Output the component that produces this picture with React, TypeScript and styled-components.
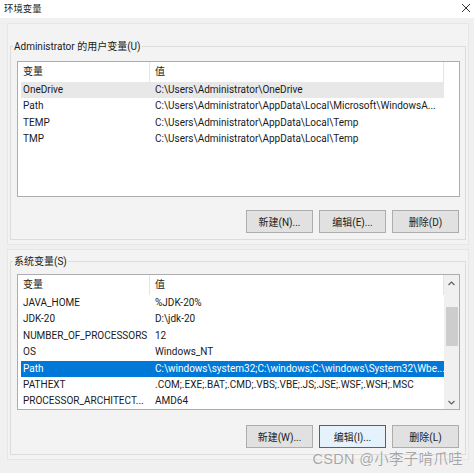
import React from "react";
import styled, { createGlobalStyle } from "styled-components";

const GlobalStyle = createGlobalStyle`
  html, body {
    margin: 0;
    padding: 0;
    background: #f0f0f0;
  }
  body {
    font-family: Roboto, "Noto Sans CJK SC", sans-serif;
    font-size: 10px;
    color: #1a1a1a;
  }
  * { box-sizing: border-box; }
`;

const Window = styled.div`
  position: relative;
  width: 474px;
  height: 473px;
  overflow: hidden;
  background: #f0f0f0;
  display: flex;
  flex-direction: column;
`;

const TitleBar = styled.div`
  height: 18px;
  background: #fff;
  display: flex;
  align-items: center;
  justify-content: space-between;
  padding: 0 3px 2px 4px;
`;

const Title = styled.span`
  font-size: 9.4px;
  color: #222;
`;

const Content = styled.div`
  padding: 5px 5px 0 7px;
  display: flex;
  flex-direction: column;
`;

const Panel = styled.div<{ $padTop: number; $mt?: number }>`
  margin-top: ${(p) => p.$mt ?? 0}px;
  border: 1px solid #e6e6e6;
  background: #f3f3f3;
  padding: ${(p) => p.$padTop}px 2px 4px 2px;
`;

const GroupBox = styled.fieldset<{ $gap: number }>`
  margin: 0;
  min-inline-size: 0;
  border: 1px solid #dcdcdc;
  padding: ${(p) => p.$gap}px 5px 6px 6px;
`;

const Legend = styled.legend`
  margin-left: -4px;
  padding: 0 1px;
  line-height: 13px;
  font-size: 10px;
  color: #1a1a1a;
`;

const ListBox = styled.div`
  height: 136px;
  border: 1px solid #adadad;
  background: #fff;
  display: flex;
  overflow: hidden;
`;

const ListArea = styled.div<{ $reserve: number }>`
  flex: 1;
  min-width: 0;
  padding: 0 ${(p) => p.$reserve}px 0 3px;
`;

const HeaderRow = styled.div`
  display: grid;
  grid-template-columns: 128px 1fr;
  height: 20px;
  line-height: 19px;
  border-right: 1px solid #e5e5e5;
`;

const HeaderCell = styled.div<{ $sep?: boolean }>`
  padding-left: ${(p) => (p.$sep ? 5 : 2)}px;
  border-left: ${(p) => (p.$sep ? "1px solid #e5e5e5" : "none")};
`;

const Row = styled.div<{ $state?: "selected" | "hover" }>`
  display: grid;
  grid-template-columns: 128px 1fr;
  height: 16.4px;
  line-height: 16.4px;
  white-space: nowrap;
  background: ${(p) =>
    p.$state === "selected" ? "#0078d7" : p.$state === "hover" ? "#e8e8e8" : "transparent"};
  color: ${(p) => (p.$state === "selected" ? "#fff" : "#1a1a1a")};
`;

const Cell = styled.div<{ $value?: boolean }>`
  padding-left: ${(p) => (p.$value ? 6 : 2)}px;
  overflow: hidden;
`;

const ScrollBar = styled.div`
  width: 15px;
  background: #f0f0f0;
  display: flex;
  flex-direction: column;
`;

const ArrowBox = styled.div<{ $h: number }>`
  height: ${(p) => p.$h}px;
  display: flex;
  align-items: center;
  justify-content: center;
`;

const Track = styled.div`
  flex: 1;
`;

const Thumb = styled.div`
  margin: 15px 1px 0 2px;
  height: 39px;
  background: #cdcdcd;
`;

const ButtonRow = styled.div<{ $mt: number }>`
  margin-top: ${(p) => p.$mt}px;
  display: flex;
  justify-content: flex-end;
  gap: 6px;
  padding-right: 1px;
`;

const Button = styled.button<{ $default?: boolean }>`
  width: 67px;
  height: 23px;
  padding: 0;
  font-family: Roboto, "Noto Sans CJK SC", sans-serif;
  font-size: 10px;
  color: #1a1a1a;
  background: ${(p) => (p.$default ? "#e5f1fb" : "#e1e1e1")};
  border: 1px solid ${(p) => (p.$default ? "#0078d7" : "#adadad")};
`;

const Watermark = styled.div`
  position: absolute;
  right: 11px;
  bottom: 5px;
  font-family: "Liberation Sans", "Noto Sans CJK SC", sans-serif;
  font-size: 14.5px;
  letter-spacing: 0.3px;
  color: rgba(150, 150, 150, 0.85);
  text-shadow: 0 0 1px #fff;
  pointer-events: none;
`;

type Variable = { name: string; value: string; state?: "selected" | "hover" };

const userVars: Variable[] = [
  { name: "OneDrive", value: "C:\\Users\\Administrator\\OneDrive", state: "hover" },
  { name: "Path", value: "C:\\Users\\Administrator\\AppData\\Local\\Microsoft\\WindowsA..." },
  { name: "TEMP", value: "C:\\Users\\Administrator\\AppData\\Local\\Temp" },
  { name: "TMP", value: "C:\\Users\\Administrator\\AppData\\Local\\Temp" },
];

const systemVars: Variable[] = [
  { name: "JAVA_HOME", value: "%JDK-20%" },
  { name: "JDK-20", value: "D:\\jdk-20" },
  { name: "NUMBER_OF_PROCESSORS", value: "12" },
  { name: "OS", value: "Windows_NT" },
  { name: "Path", value: "C:\\windows\\system32;C:\\windows;C:\\windows\\System32\\Wbe...", state: "selected" },
  { name: "PATHEXT", value: ".COM;.EXE;.BAT;.CMD;.VBS;.VBE;.JS;.JSE;.WSF;.WSH;.MSC" },
  { name: "PROCESSOR_ARCHITECT...", value: "AMD64" },
];

const Chevron = ({ up }: { up?: boolean }) => (
  <svg width="7" height="5" viewBox="0 0 7 5">
    <path
      d={up ? "M0.5 4 L3.5 1 L6.5 4" : "M0.5 1 L3.5 4 L6.5 1"}
      fill="none"
      stroke="#606060"
      strokeWidth="1.2"
    />
  </svg>
);

const VarList = ({ rows, scroll }: { rows: Variable[]; scroll?: boolean }) => (
  <ListBox>
    <ListArea $reserve={scroll ? 0 : 15}>
      <HeaderRow>
        <HeaderCell>变量</HeaderCell>
        <HeaderCell $sep>值</HeaderCell>
      </HeaderRow>
      {rows.map((r) => (
        <Row key={r.name} $state={r.state}>
          <Cell>{r.name}</Cell>
          <Cell $value>{r.value}</Cell>
        </Row>
      ))}
    </ListArea>
    {scroll && (
      <ScrollBar>
        <ArrowBox $h={17}>
          <Chevron up />
        </ArrowBox>
        <Track>
          <Thumb />
        </Track>
        <ArrowBox $h={13}>
          <Chevron />
        </ArrowBox>
      </ScrollBar>
    )}
  </ListBox>
);

const App = () => {
  return (
    <>
      <GlobalStyle />
      <Window>
        <TitleBar>
          <Title>环境变量</Title>
          <svg width="10" height="10" viewBox="0 0 10 10">
            <path d="M1 1 L9 9 M9 1 L1 9" stroke="#333" strokeWidth="1" />
          </svg>
        </TitleBar>
        <Content>
          <Panel $padTop={16}>
            <GroupBox $gap={8}>
              <Legend>Administrator 的用户变量(U)</Legend>
              <VarList rows={userVars} />
              <ButtonRow $mt={13}>
                <Button>新建(N)...</Button>
                <Button>编辑(E)...</Button>
                <Button>删除(D)</Button>
              </ButtonRow>
            </GroupBox>
          </Panel>
          <Panel $padTop={5} $mt={4}>
            <GroupBox $gap={6}>
              <Legend>系统变量(S)</Legend>
              <VarList rows={systemVars} scroll />
              <ButtonRow $mt={15}>
                <Button>新建(W)...</Button>
                <Button $default>编辑(I)...</Button>
                <Button>删除(L)</Button>
              </ButtonRow>
            </GroupBox>
          </Panel>
        </Content>
        <Watermark>CSDN @小李子啃爪哇</Watermark>
      </Window>
    </>
  );
};

export default App;
